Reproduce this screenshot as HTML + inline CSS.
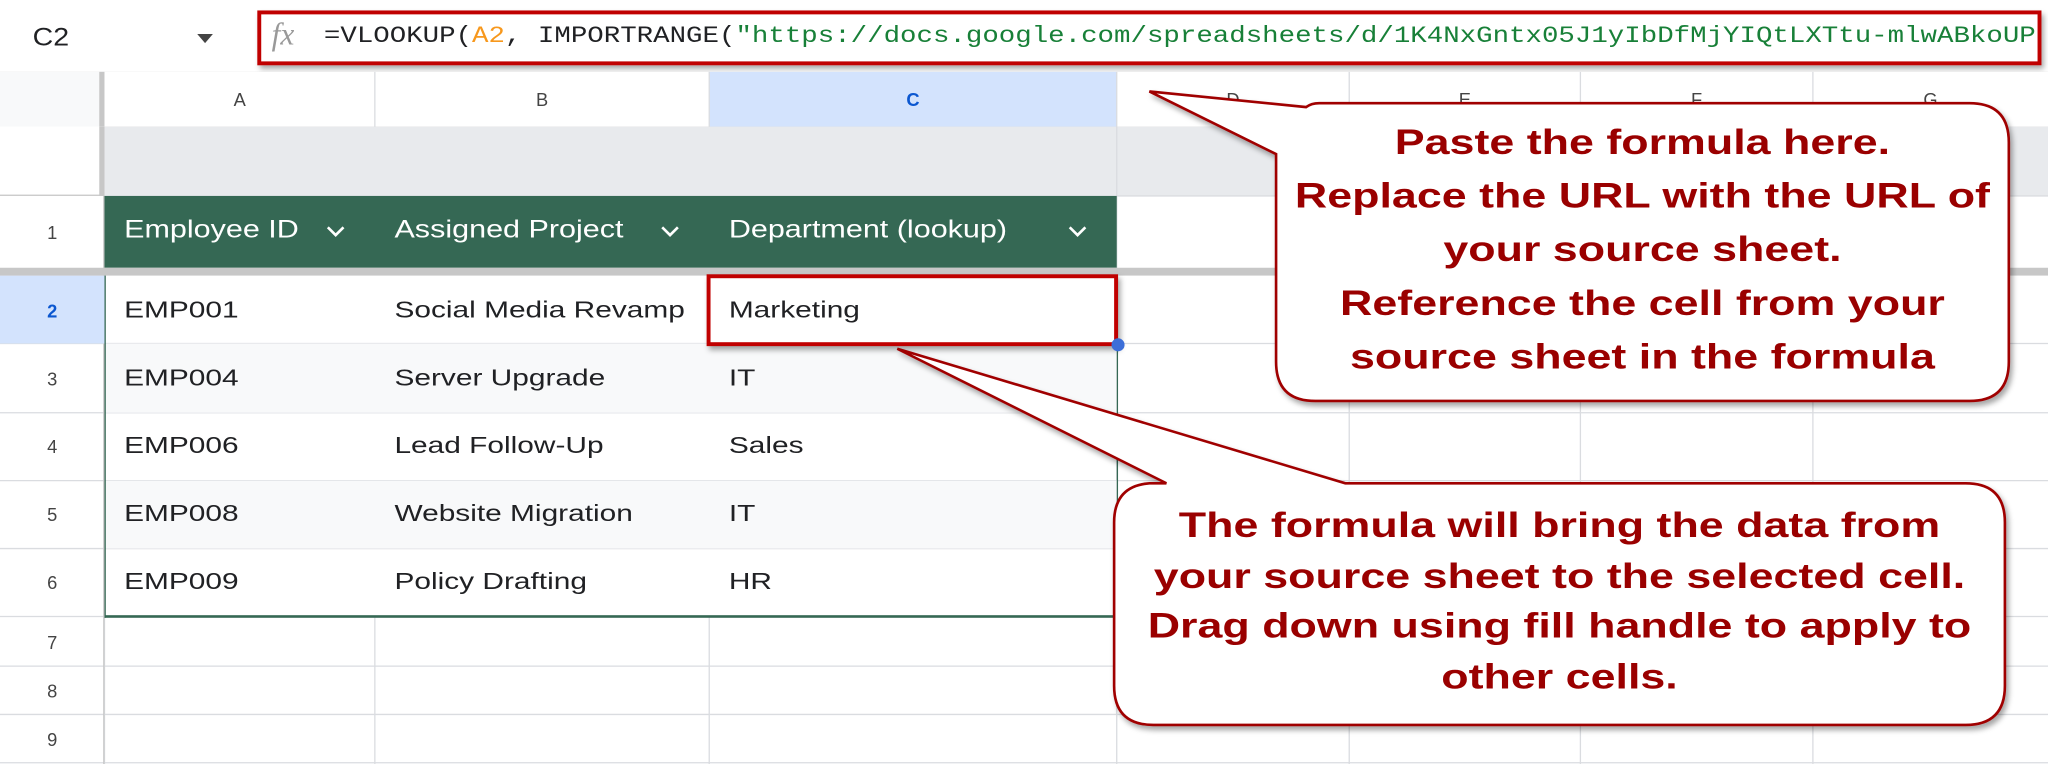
<!DOCTYPE html>
<html><head><meta charset="utf-8">
<style>
html,body{margin:0;padding:0;background:#fff;}
body{width:2048px;height:764px;overflow:hidden;position:relative;}
#s{position:absolute;left:0;top:0;width:1568px;height:585px;transform:scale(1.30612);transform-origin:0 0;font-family:"Liberation Sans",Arial,sans-serif;color:#202124;}
.a{position:absolute;}
.t{position:absolute;font-size:18px;white-space:nowrap;transform:scaleX(1.27);transform-origin:0 0;}
.hd{position:absolute;font-size:14px;color:#444;text-align:center;}
.c{position:absolute;text-align:center;font-weight:bold;font-size:27px;color:#9a0000;white-space:nowrap;transform:scaleX(1.27);transform-origin:50% 0;}
</style></head><body>
<div id="s">
<div class="a" style="left:0;top:0;width:1568px;height:55px;background:#fff;border-bottom:1px solid #c7c7c7;"></div>
<div class="t" style="left:25px;top:19px;font-size:19px;color:#202124;transform:scaleX(1.15);">C2</div>
<div class="a" style="left:151px;top:26px;width:0;height:0;border-left:6px solid transparent;border-right:6px solid transparent;border-top:7px solid #444;"></div>
<div class="a" style="left:197px;top:8px;width:1360px;height:36px;border:3px solid #c00000;background:#fff;box-shadow:2px 3px 4px rgba(0,0,0,.35);overflow:hidden;">
<div class="t" style="left:8px;top:3px;font-family:'Liberation Serif',serif;font-style:italic;font-size:24px;color:#999;transform:none;">fx</div>
<div class="t" style="left:48px;top:7px;font-family:'Liberation Mono',monospace;font-size:17.5px;color:#202124;transform:scaleX(1.2);">=VLOOKUP(<span style="color:#f7981d">A2</span>, IMPORTRANGE(<span style="color:#188038">"https://docs.google.com/spreadsheets/d/1K4NxGntx05J1yIbDfMjYIQtLXTtu-mlwABkoUP"</span></div>
</div>
<div class="a" style="left:0;top:55px;width:80px;height:42px;background:#f8f9fa;border-right:4px solid #c7c7c7;box-sizing:border-box;"></div>
<div class="a" style="left:80px;top:55px;width:1488px;height:42px;background:#fff;border-bottom:1px solid #c7c7c7;"></div>
<div class="a" style="left:543px;top:55px;width:312px;height:42px;background:#d3e3fd;"></div>
<div class="hd" style="left:80px;top:68px;width:207px;">A</div>
<div class="hd" style="left:287px;top:68px;width:256px;">B</div>
<div class="hd" style="left:543px;top:68px;width:312px;color:#0b57d0;font-weight:bold;">C</div>
<div class="hd" style="left:855px;top:68px;width:178px;">D</div>
<div class="hd" style="left:1033px;top:68px;width:177px;">E</div>
<div class="hd" style="left:1210px;top:68px;width:178px;">F</div>
<div class="hd" style="left:1388px;top:68px;width:180px;">G</div>
<div class="a" style="left:80px;top:97px;width:1488px;height:53px;background:#e8eaed;"></div>
<div class="a" style="left:0;top:97px;width:80px;height:53px;background:#fff;border-right:4px solid #c7c7c7;box-sizing:border-box;border-bottom:1px solid #c7c7c7;"></div>
<svg class="a" style="left:0;top:0" width="1568" height="585">
<g stroke="#dadce0" stroke-width="1">
<line x1="287" y1="55" x2="287" y2="97"/><line x1="543" y1="55" x2="543" y2="97"/><line x1="855" y1="55" x2="855" y2="585"/><line x1="1033" y1="55" x2="1033" y2="585"/><line x1="1210" y1="55" x2="1210" y2="585"/><line x1="1388" y1="55" x2="1388" y2="585"/>
<line x1="287" y1="472" x2="287" y2="585"/><line x1="543" y1="472" x2="543" y2="585"/>
<line x1="80" y1="211" x2="80" y2="585"/>
<line x1="0" y1="263" x2="1568" y2="263"/><line x1="0" y1="316" x2="1568" y2="316"/><line x1="0" y1="368" x2="1568" y2="368"/><line x1="0" y1="420" x2="1568" y2="420"/><line x1="0" y1="472" x2="1568" y2="472"/><line x1="0" y1="510" x2="1568" y2="510"/><line x1="0" y1="547" x2="1568" y2="547"/><line x1="0" y1="584" x2="1568" y2="584"/>
<line x1="855" y1="150" x2="1568" y2="150"/>
</g>
</svg>
<div class="a" style="left:0;top:150px;width:80px;height:435px;border-right:1px solid #c7c7c7;box-sizing:border-box;"></div>
<div class="a" style="left:0;top:211px;width:80px;height:52px;background:#d3e3fd;"></div>
<div class="hd" style="left:0;top:170px;width:80px;">1</div>
<div class="hd" style="left:0;top:230px;width:80px;color:#0b57d0;font-weight:bold;">2</div>
<div class="hd" style="left:0;top:282px;width:80px;">3</div>
<div class="hd" style="left:0;top:334px;width:80px;">4</div>
<div class="hd" style="left:0;top:386px;width:80px;">5</div>
<div class="hd" style="left:0;top:438px;width:80px;">6</div>
<div class="hd" style="left:0;top:484px;width:80px;">7</div>
<div class="hd" style="left:0;top:521px;width:80px;">8</div>
<div class="hd" style="left:0;top:558px;width:80px;">9</div>
<div class="a" style="left:80px;top:150px;width:775px;height:55px;background:#356854;"></div>
<div class="a" style="left:0;top:205px;width:1568px;height:6px;background:#c7c7c7;"></div>
<div class="t" style="left:95px;top:166px;color:#fff;font-size:19px;transform:scaleX(1.23);">Employee ID</div>
<div class="t" style="left:302px;top:166px;color:#fff;font-size:19px;transform:scaleX(1.23);">Assigned Project</div>
<div class="t" style="left:558px;top:166px;color:#fff;font-size:19px;transform:scaleX(1.23);">Department (lookup)</div>
<svg class="a" style="left:0;top:0" width="900" height="210"><g stroke="#fff" stroke-width="2" fill="none"><path d="M251 174l6 6 6-6"/><path d="M507 174l6 6 6-6"/><path d="M819 174l6 6 6-6"/></g></svg>
<div class="a" style="left:81px;top:263px;width:774px;height:53px;background:#f8f9fa;"></div>
<div class="a" style="left:81px;top:368px;width:774px;height:52px;background:#f8f9fa;"></div>
<div class="a" style="left:80px;top:211px;width:774px;height:260px;border-left:1.5px solid #356854;border-right:1.5px solid #356854;border-bottom:2.5px solid #356854;"></div>
<div class="t" style="left:95px;top:227px;">EMP001</div><div class="t" style="left:302px;top:227px;">Social Media Revamp</div><div class="t" style="left:558px;top:227px;">Marketing</div>
<div class="t" style="left:95px;top:279px;">EMP004</div><div class="t" style="left:302px;top:279px;">Server Upgrade</div><div class="t" style="left:558px;top:279px;">IT</div>
<div class="t" style="left:95px;top:331px;">EMP006</div><div class="t" style="left:302px;top:331px;">Lead Follow-Up</div><div class="t" style="left:558px;top:331px;">Sales</div>
<div class="t" style="left:95px;top:383px;">EMP008</div><div class="t" style="left:302px;top:383px;">Website Migration</div><div class="t" style="left:558px;top:383px;">IT</div>
<div class="t" style="left:95px;top:435px;">EMP009</div><div class="t" style="left:302px;top:435px;">Policy Drafting</div><div class="t" style="left:558px;top:435px;">HR</div>
<div class="a" style="left:541px;top:210px;width:309px;height:49px;border:3px solid #c00000;box-shadow:2px 3px 4px rgba(0,0,0,.35);"></div>
<div class="a" style="left:851px;top:259px;width:10px;height:10px;border-radius:50%;background:#3c6ed8;"></div>
<svg class="a" style="left:0;top:0" width="1568" height="585">
<defs><filter id="sh" x="-5%" y="-5%" width="115%" height="120%"><feDropShadow dx="2" dy="3" stdDeviation="2" flood-color="#000" flood-opacity=".35"/></filter></defs>
<g fill="#fff" stroke="#a00000" stroke-width="2" filter="url(#sh)">
<path d="M1010 79 L1508 79 Q1538 79 1538 109 L1538 277 Q1538 307 1508 307 L1007 307 Q977 307 977 277 L977 118 L880 70 L1000 82 Q1004 79 1010 79 Z"/>
<path d="M1030 370 L1505 370 Q1535 370 1535 400 L1535 525 Q1535 555 1505 555 L883 555 Q853 555 853 525 L853 400 Q853 372 880 370 L893 370 L687 267 Z"/>
</g>
</svg>
<div class="c" style="left:977px;top:89px;width:561px;line-height:41px;">Paste the formula here.<br>Replace the URL with the URL of<br>your source sheet.<br>Reference the cell from your<br>source sheet in the formula</div>
<div class="c" style="left:853px;top:383px;width:682px;line-height:38.5px;">The formula will bring the data from<br>your source sheet to the selected cell.<br>Drag down using fill handle to apply to<br>other cells.</div>
</div>
</body></html>
